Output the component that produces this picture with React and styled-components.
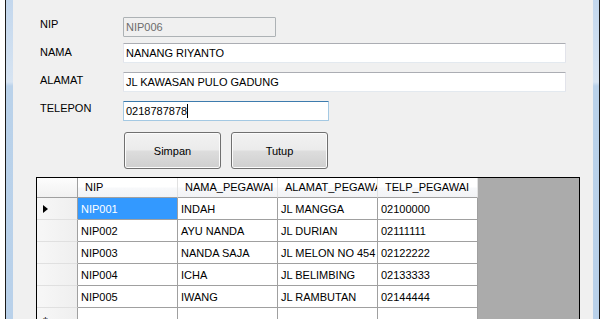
import styled, { createGlobalStyle } from "styled-components"

const GlobalStyle = createGlobalStyle`
html, body {
    margin:0;
    padding:0;
    background:#fff;
    overflow:hidden;
}
body {
    font-family: "Liberation Sans", Arial, sans-serif;
    font-size:11px;
    color:#000;
}
`

const columns = ["NIP", "NAMA_PEGAWAI", "ALAMAT_PEGAWAI", "TELP_PEGAWAI"]

const rows = [
    ["NIP001", "INDAH", "JL MANGGA", "02100000"],
    ["NIP002", "AYU NANDA", "JL DURIAN", "02111111"],
    ["NIP003", "NANDA SAJA", "JL MELON NO 454", "02122222"],
    ["NIP004", "ICHA", "JL BELIMBING", "02133333"],
    ["NIP005", "IWANG", "JL RAMBUTAN", "02144444"],
]

const App = () => {
    return (
        <>
        <GlobalStyle/>
        <Window>
            <Frame $side="left"/>
            <Content>
                <FieldRow $top={0}>
                    <Label>NIP</Label>
                    <TextBox $w={153} $state="disabled">NIP006</TextBox>
                </FieldRow>
                <FieldRow $top={6}>
                    <Label $dy={3}>NAMA</Label>
                    <TextBox $w={443}>NANANG RIYANTO</TextBox>
                </FieldRow>
                <FieldRow $top={9}>
                    <Label $dy={2}>ALAMAT</Label>
                    <TextBox $w={443}>JL KAWASAN PULO GADUNG</TextBox>
                </FieldRow>
                <FieldRow $top={9}>
                    <Label>TELEPON</Label>
                    <TextBox $w={206} $state="focus">0218787878<Caret/></TextBox>
                </FieldRow>

                <ButtonRow>
                    <Button>Simpan</Button>
                    <Button>Tutup</Button>
                </ButtonRow>

                <GridView>
                    <CornerCell/>
                    {columns.map(c => <HeadCell key={c}>{c}</HeadCell>)}
                    {rows.map((r, i) => (
                        <GridRow key={r[0]}>
                            <RowHead>{i === 0 && <Arrow/>}</RowHead>
                            {r.map((v, j) => (
                                <Cell key={j} $selected={i === 0 && j === 0}>{v}</Cell>
                            ))}
                        </GridRow>
                    ))}
                    <GridRow>
                        <RowHead><Star>*</Star></RowHead>
                        <Cell/><Cell/><Cell/><Cell/>
                    </GridRow>
                </GridView>
            </Content>
            <Frame $side="right"/>
        </Window>
        </>
    )
}

//styling starts----------------------------------------
const GridLine = "#a0a0a0"

const Window = styled.div`
display:flex;
width:607px;
height:319px;
box-sizing:border-box;
padding:0 7px 0 5px;
background:#fff;
`

const Frame = styled.div`
width:${p => p.$side === "left" ? 7 : 6}px;
border-${p => p.$side === "left" ? "left" : "right"}:1px solid #1b1b1b;
background: linear-gradient(#c3d7ed 0px, #d7e4f2 82px, #bad2ea 86px, #b9d1ea 100%);
`

const Content = styled.div`
flex:1;
display:flex;
flex-direction:column;
background:#f0f0f0;
padding:17px 13px 0 23px;
overflow:hidden;
`

const FieldRow = styled.div`
display:flex;
align-items:flex-start;
padding-left:4px;
margin-top:${p => p.$top}px;
`

const Label = styled.div`
width:83px;
line-height:13px;
padding-top:${p => p.$dy || 1}px;
`

const TextBox = styled.div`
position:relative;
width:${p => p.$w}px;
height:20px;
box-sizing:border-box;
padding:0 2px;
line-height:18px;
white-space:nowrap;
background:${p => p.$state === "disabled" ? "#f0f0f0" : "#fff"};
color:${p => p.$state === "disabled" ? "#6d6d6d" : "#000"};
border:1px solid;
border-color:${p =>
    p.$state === "disabled" ? "#adb2b5" :
    p.$state === "focus" ? "#3d7bad #a4c9e3 #a4c9e3 #a4c9e3" :
    "#abadb3 #e2e3ea #e3e9ef #e2e3ea"};
border-radius:1px;
`

const Caret = styled.span`
display:inline-block;
width:1px;
height:14px;
background:#000;
vertical-align:-3px;
`

const ButtonRow = styled.div`
display:flex;
gap:10px;
margin-top:11px;
padding-left:88px;
`

const Button = styled.button`
width:97px;
height:37px;
padding:0;
border:1px solid #707070;
border-radius:3px;
background:linear-gradient(#f2f2f2 0%, #ebebeb 48%, #dddddd 52%, #cfcfcf 100%);
box-shadow:inset 0 0 0 1px #fbfbfb;
font-family:"Liberation Sans", Arial, sans-serif;
font-size:11px;
color:#000;
`

const GridView = styled.div`
flex:1;
margin-top:8px;
border:1px solid #000;
border-bottom:none;
background:#ababab;
display:grid;
grid-template-columns:41px repeat(4, 100px);
grid-template-rows:20px;
grid-auto-rows:22px;
align-content:start;
justify-content:start;
overflow:hidden;
`

const GridRow = styled.div`
display:contents;
`

const CornerCell = styled.div`
background:linear-gradient(#fdfdfd, #f1f1f1);
border-right:1px solid ${GridLine};
border-bottom:1px solid ${GridLine};
`

const HeadCell = styled.div`
background:linear-gradient(#ffffff 0%, #ffffff 45%, #f7f8fa 55%, #f2f3f5 100%);
border-right:1px solid #e1e1e1;
border-bottom:1px solid ${GridLine};
padding-left:7px;
line-height:19px;
white-space:nowrap;
overflow:hidden;
`

const RowHead = styled.div`
display:flex;
align-items:center;
padding-left:6px;
background:linear-gradient(90deg, #f7f7f7, #efefef);
border-right:1px solid ${GridLine};
border-bottom:1px solid #e0e0e0;
`

const Arrow = styled.span`
width:0;
height:0;
border-top:4px solid transparent;
border-bottom:4px solid transparent;
border-left:5px solid #000;
margin-top:1px;
`

const Star = styled.span`
font-size:12px;
line-height:12px;
margin-top:6px;
`

const Cell = styled.div`
background:${p => p.$selected ? "#3399ff" : "#fff"};
color:${p => p.$selected ? "#fff" : "#000"};
border-right:1px solid ${GridLine};
border-bottom:1px solid ${GridLine};
padding-left:3px;
line-height:22px;
white-space:nowrap;
overflow:hidden;
`

export default App
